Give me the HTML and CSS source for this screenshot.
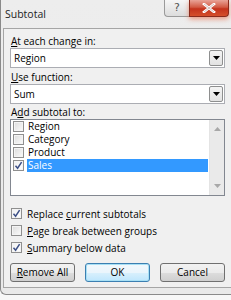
FILE: index.html
```html
<!DOCTYPE html>
<html>
<head>
<meta charset="utf-8">
<link rel="stylesheet" href="styles.css">
</head>
<body>
<div class="dialog">
  <div class="titlebar">
    <span class="title">Subtotal</span>
    <div class="caption">
      <div class="cap-help">?</div>
      <div class="cap-close">
        <svg width="14" height="10" viewBox="0 0 14 10"><path d="M2 1 L12 9 M12 1 L2 9" stroke="#fff" stroke-width="2.6" stroke-linecap="square"/><path d="M2 1 L12 9 M12 1 L2 9" stroke="#6a2a20" stroke-width="0.6" opacity="0.5"/></svg>
      </div>
    </div>
  </div>
  <div class="panel">
    <div class="lbl lbl-first"><u>A</u>t each change in:</div>
    <div class="combo">
      <span class="combo-text">Region</span>
      <div class="drop"><svg width="7" height="4" viewBox="0 0 7 4"><path d="M0 0 H7 L3.5 4 Z" fill="#000"/></svg></div>
    </div>
    <div class="lbl lbl-second"><u>U</u>se function:</div>
    <div class="combo">
      <span class="combo-text">Sum</span>
      <div class="drop"><svg width="7" height="4" viewBox="0 0 7 4"><path d="M0 0 H7 L3.5 4 Z" fill="#000"/></svg></div>
    </div>
    <div class="lbl lbl-third">A<u>d</u>d subtotal to:</div>
    <div class="list">
      <div class="items">
        <div class="item"><span class="cb"></span><span class="item-text">Region</span></div>
        <div class="item"><span class="cb"></span><span class="item-text">Category</span></div>
        <div class="item"><span class="cb"></span><span class="item-text">Product</span></div>
        <div class="item"><span class="cb cb-on"><svg width="9" height="9" viewBox="0 0 9 9"><path d="M1.5 4.8 L3.6 7.2 L7.6 1.2" fill="none" stroke="#3c4f86" stroke-width="1.5"/></svg></span><span class="item-text sel">Sales</span></div>
      </div>
      <div class="scroll">
        <svg width="7" height="4" viewBox="0 0 7 4"><path d="M0 4 H7 L3.5 0 Z" fill="#a8a8a8"/></svg>
        <svg width="7" height="4" viewBox="0 0 7 4"><path d="M0 0 H7 L3.5 4 Z" fill="#a8a8a8"/></svg>
      </div>
    </div>
    <div class="checks">
      <div class="check"><span class="cb cb-on"><svg width="9" height="9" viewBox="0 0 9 9"><path d="M1.5 4.8 L3.6 7.2 L7.6 1.2" fill="none" stroke="#3c4f86" stroke-width="1.5"/></svg></span><span>Replace <u>c</u>urrent subtotals</span></div>
      <div class="check"><span class="cb"></span><span><u>P</u>age break between groups</span></div>
      <div class="check"><span class="cb cb-on"><svg width="9" height="9" viewBox="0 0 9 9"><path d="M1.5 4.8 L3.6 7.2 L7.6 1.2" fill="none" stroke="#3c4f86" stroke-width="1.5"/></svg></span><span><u>S</u>ummary below data</span></div>
    </div>
    <div class="buttons">
      <div class="btn"><u>R</u>emove All</div>
      <div class="btn btn-default">OK</div>
      <div class="btn">Cancel</div>
    </div>
  </div>
</div>
</body>
</html>
```

FILE: styles.css
```css
html, body {
  margin: 0;
  padding: 0;
}
body {
  background: #f7f7f7;
  font-family: "Open Sans", "Noto Sans", sans-serif;
  font-size: 10px;
  color: #000;
  width: 231px;
  height: 300px;
  overflow: hidden;
}
.dialog {
  width: 232px;
  height: 295px;
  box-sizing: border-box;
  background: linear-gradient(#ededed, #e9e9e9);
  border: 1px solid #8a8a8a;
  border-top: none;
  border-right: none;
  border-radius: 0 0 0 6px;
  display: flex;
  flex-direction: column;
}
.titlebar {
  height: 28px;
  display: flex;
  justify-content: space-between;
  align-items: flex-start;
}
.title {
  margin-top: 7px;
  margin-left: 4px;
  font-size: 10.5px;
  line-height: 15px;
  color: #1e1e1e;
}
.caption {
  display: flex;
  margin-right: 3px;
}
.cap-help {
  width: 25px;
  height: 17px;
  box-sizing: border-box;
  border: 1px solid #9a9a9a;
  border-top: none;
  border-right: none;
  border-radius: 0 0 0 4px;
  background: linear-gradient(#f6f6f6, #dcdcdc);
  font-family: "DejaVu Sans", sans-serif;
  font-size: 11px;
  line-height: 15px;
  text-align: center;
  color: #555;
}
.cap-close {
  width: 40px;
  height: 17px;
  box-sizing: border-box;
  border: 1px solid #8a2a1c;
  border-top: none;
  border-radius: 0 0 4px 0;
  background: linear-gradient(#e9a397 0%, #d25a44 45%, #c4321c 55%, #d54f2b 100%);
  box-shadow: 0 2px 5px rgba(232, 90, 50, 0.6);
  display: flex;
  align-items: center;
  justify-content: center;
}
.panel {
  margin-left: 2px;
  margin-right: 0;
  height: 260px;
  box-sizing: border-box;
  border: 1px solid #a5a5a5;
  background: #f0f0f0;
  padding: 5px 6px 0 6px;
  display: flex;
  flex-direction: column;
}
.lbl {
  height: 14px;
  line-height: 14px;
  padding-left: 1px;
  white-space: nowrap;
}
.lbl-second {
  margin-top: 2px;
}
.lbl-third {
  margin-top: 1px;
}
.combo {
  height: 20px;
  box-sizing: border-box;
  border: 1px solid #abadb3;
  background: #fff;
  display: flex;
  align-items: center;
  justify-content: space-between;
}
.combo-text {
  padding-left: 3px;
  line-height: 18px;
}
.drop {
  width: 14px;
  height: 16px;
  margin-right: 1px;
  box-sizing: border-box;
  border: 1px solid #8e8f8f;
  border-radius: 2px;
  background: linear-gradient(#f4f4f4, #e2e2e2);
  display: flex;
  align-items: center;
  justify-content: center;
}
.list {
  height: 77px;
  box-sizing: border-box;
  border: 1px solid #828790;
  background: #fff;
  display: flex;
}
.items {
  flex: 1;
  padding-top: 0;
  padding-left: 2px;
  padding-right: 1px;
}
.item {
  height: 13px;
  display: flex;
  align-items: center;
}
.item-text {
  flex: 1;
  height: 13px;
  line-height: 13px;
  margin-left: 3px;
  padding-left: 1px;
}
.item-text.sel {
  background: #3399ff;
  color: #fff;
}
.cb {
  width: 11px;
  height: 11px;
  box-sizing: border-box;
  border: 1px solid #8f8f8f;
  background: linear-gradient(135deg, #dcdcdc, #fbfbfb);
  box-shadow: inset 0 0 0 1px #f4f4f4;
  display: flex;
  align-items: center;
  justify-content: center;
  flex: none;
}
.cb-on {
  background: linear-gradient(135deg, #f0f0f0, #ffffff);
}
.scroll {
  width: 14px;
  background: #eaeaea;
  border-left: 1px solid #e4e4e4;
  display: flex;
  flex-direction: column;
  justify-content: space-between;
  align-items: center;
  padding: 7px 0 7px 0;
}
.checks {
  margin-top: 9px;
  display: flex;
  flex-direction: column;
}
.check {
  height: 17px;
  display: flex;
  align-items: center;
  padding-left: 1px;
}
.check .cb {
  margin-right: 5px;
}
.buttons {
  margin-top: 7px;
  display: flex;
  justify-content: space-between;
}
.btn {
  width: 65px;
  height: 19px;
  box-sizing: border-box;
  border: 1px solid #707070;
  border-radius: 3px;
  background: linear-gradient(#f2f2f2 0%, #ebebeb 50%, #dddddd 51%, #cfcfcf 100%);
  text-align: center;
  line-height: 17px;
}
.btn-default {
  border-color: #3c7fb1;
  box-shadow: inset 0 0 0 1px #a8e0f5;
  background: linear-gradient(#f2f8fc 0%, #eaf5fc 50%, #d9f0fc 51%, #bee6fd 100%);
}
```
